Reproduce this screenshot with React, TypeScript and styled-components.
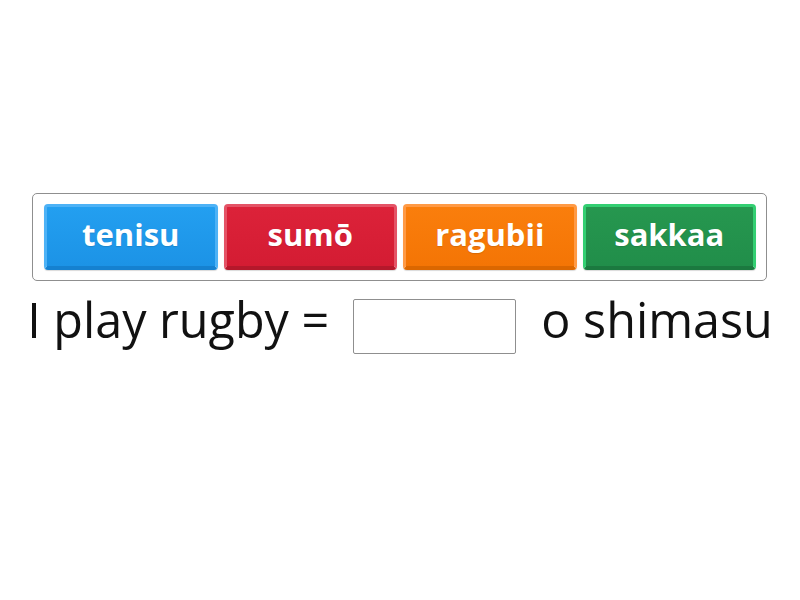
import React from "react";
import styled, { createGlobalStyle } from "styled-components";

const Global = createGlobalStyle`
  html, body { margin: 0; padding: 0; background: #ffffff; }
  body { font-family: "Open Sans", "Noto Sans", sans-serif; }
`;

const Page = styled.div`
  width: 800px;
  height: 600px;
  display: flex;
  flex-direction: column;
  align-items: stretch;
  padding: 193px 33px 0 32px;
  box-sizing: border-box;
`;

const Tray = styled.div`
  box-sizing: border-box;
  border: 1px solid #8f8f8f;
  border-radius: 5px;
  padding: 10px 10px 10px 11px;
  display: flex;
  gap: 6px;
`;

type Tone = { rim: string; face: string; faceTop: string; bottom: string };

const tones: Record<string, Tone> = {
  blue: { rim: "#4db2f6", faceTop: "#239ff0", face: "#1c93e6", bottom: "#1581d0" },
  red: { rim: "#e45366", faceTop: "#dc2239", face: "#d41c33", bottom: "#b5182b" },
  orange: { rim: "#ff9a45", faceTop: "#fa7e0c", face: "#f47505", bottom: "#db6700" },
  green: { rim: "#33cf72", faceTop: "#26974f", face: "#218e4a", bottom: "#1b793f" },
};

const Tile = styled.div<{ $tone: Tone }>`
  flex: 1;
  height: 66px;
  box-sizing: border-box;
  border-radius: 4px;
  border-style: solid;
  border-width: 3px 3px 4px 3px;
  border-color: ${(p) => p.$tone.rim} ${(p) => p.$tone.rim} ${(p) => p.$tone.bottom}
    ${(p) => p.$tone.rim};
  background: linear-gradient(${(p) => p.$tone.faceTop}, ${(p) => p.$tone.face});
  box-shadow: 0 1px 1px rgba(0, 0, 0, 0.15);
  display: flex;
  align-items: center;
  justify-content: center;
  color: #ffffff;
  font-family: "Open Sans", sans-serif;
  font-weight: 700;
  font-size: 31px;
  padding-bottom: 5px;
  text-shadow: 0 1px 1px rgba(0, 0, 0, 0.12);
`;

const Sentence = styled.div`
  margin: 5px -33px 0 -32px;
  display: flex;
  align-items: flex-start;
  justify-content: center;
  font-family: "Open Sans", sans-serif;
  font-size: 48.5px;
  line-height: 1.362;
  color: #111111;
  white-space: pre;
`;

const Gap = styled.div`
  width: 163px;
  height: 55px;
  box-sizing: border-box;
  border: 1px solid #8f8f8f;
  border-radius: 2px;
  margin: 13px 25px 0 24px;
  background: #ffffff;
`;

const words: { text: string; tone: string }[] = [
  { text: "tenisu", tone: "blue" },
  { text: "sumō", tone: "red" },
  { text: "ragubii", tone: "orange" },
  { text: "sakkaa", tone: "green" },
];

export default function App() {
  return (
    <>
      <Global />
      <Page>
        <Tray>
          {words.map((w) => (
            <Tile key={w.text} $tone={tones[w.tone]}>
              {w.text}
            </Tile>
          ))}
        </Tray>
        <Sentence>
          <span>I play rugby =</span>
          <Gap />
          <span>o shimasu</span>
        </Sentence>
      </Page>
    </>
  );
}
